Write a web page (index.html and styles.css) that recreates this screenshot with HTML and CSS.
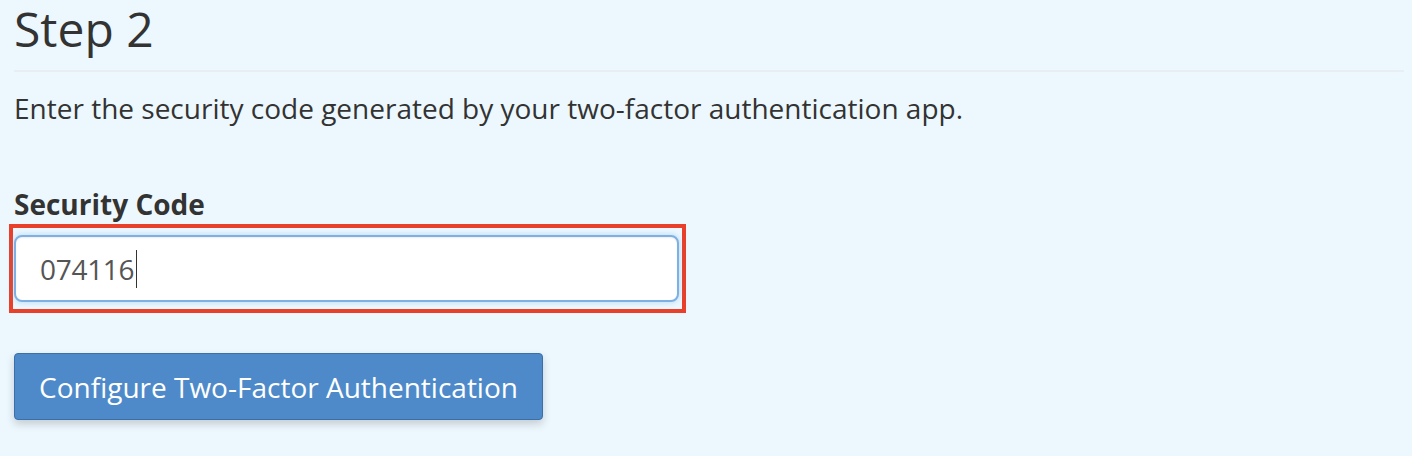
FILE: index.html
```html
<!DOCTYPE html>
<html lang="en">
<head>
<meta charset="utf-8">
<title>Step 2</title>
<link rel="stylesheet" href="styles.css">
</head>
<body>
<main class="page">
  <h2 class="step-title">Step 2</h2>
  <p class="intro">Enter the security code generated by your two-factor authentication app.</p>
  <div class="field">
    <label class="field-label" for="code">Security Code</label>
    <div class="highlight">
      <div class="input-box" id="code">
        <span class="input-value">074116</span><span class="caret"></span>
      </div>
    </div>
  </div>
  <button class="btn-primary" type="button">Configure Two-Factor Authentication</button>
</main>
</body>
</html>
```
FILE: styles.css
```css
html, body {
  margin: 0;
  padding: 0;
  background: #edf8fe;
}
body {
  font-family: "Open Sans", "Noto Sans", sans-serif;
  color: #333333;
  width: 1412px;
  height: 456px;
  overflow: hidden;
}
.page {
  padding: 0 8px 0 14px;
  display: flex;
  flex-direction: column;
  align-items: flex-start;
}
.step-title {
  align-self: stretch;
  margin: 0;
  font-size: 48px;
  font-weight: 400;
  line-height: 58px;
  padding-bottom: 12px;
  border-bottom: 2px solid #e8eef2;
}
.intro {
  margin: 16px 0 0 0;
  font-size: 28px;
  line-height: 40px;
}
.field {
  margin-top: 59px;
  display: flex;
  flex-direction: column;
  align-items: flex-start;
}
.field-label {
  font-size: 28px;
  font-weight: 700;
  line-height: 34px;
}
.highlight {
  margin: 3px 0 0 -5px;
  padding: 7px 3px 7px 1px;
  border: 4px solid #e8402a;
}
.input-box {
  box-sizing: border-box;
  width: 665px;
  height: 67px;
  border: 2px solid #7eb0e3;
  border-radius: 8px;
  background: #ffffff;
  box-shadow: 0 0 6px rgba(102, 175, 233, 0.45), inset 0 1px 2px rgba(0, 0, 0, 0.08);
  display: flex;
  align-items: center;
  padding-left: 24px;
}
.input-value {
  font-size: 28px;
  color: #555555;
  letter-spacing: -0.3px;
}
.caret {
  display: inline-block;
  width: 1px;
  height: 38px;
  background: #333333;
  margin-left: 2px;
}
.btn-primary {
  margin-top: 40px;
  width: 529px;
  height: 67px;
  border: 1px solid #3b6fa8;
  border-radius: 4px;
  background: #4e8ac9;
  color: #ffffff;
  font-family: "Open Sans", "Noto Sans", sans-serif;
  font-size: 28px;
  padding: 0;
  box-shadow: 0 4px 8px rgba(0, 0, 0, 0.18);
}
```
